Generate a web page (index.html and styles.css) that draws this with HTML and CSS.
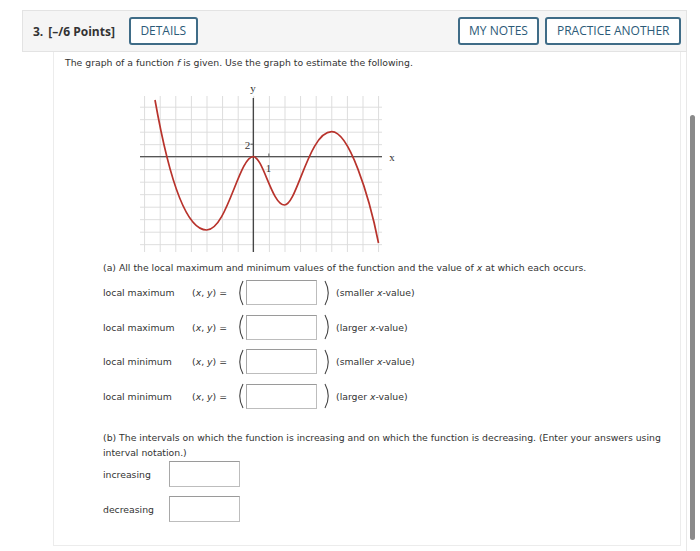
FILE: index.html
```html
<!DOCTYPE html>
<html>
<head>
<meta charset="utf-8">
<link rel="stylesheet" href="styles.css">
</head>
<body>
<div class="page">
  <div class="question">
    <div class="qhead">
      <span class="qnum">3.</span>
      <span class="qpts">[–/6 Points]</span>
      <button class="btn btn-details">DETAILS</button>
      <span class="spacer"></span>
      <button class="btn">MY NOTES</button>
      <button class="btn">PRACTICE ANOTHER</button>
    </div>
    <div class="qwrap">
      <div class="qbody">
        <p class="intro">The graph of a function <i>f</i> is given. Use the graph to estimate the following.</p>
        <svg class="graph" width="270" height="172" viewBox="128 80 270 172">
          <defs>
            <pattern id="grid" patternUnits="userSpaceOnUse" x="144.1" y="106.7" width="15.6" height="12.5">
              <path d="M0.5 0 V12.5 M0 0.5 H15.6" stroke="#dcdcdc" stroke-width="1" fill="none"/>
            </pattern>
          </defs>
          <rect x="140" y="96" width="242" height="156" fill="url(#grid)"/>
          <line x1="140" y1="156.7" x2="382" y2="156.7" stroke="#555" stroke-width="1.2"/>
          <line x1="253.3" y1="98" x2="253.3" y2="252" stroke="#333" stroke-width="1.2"/>
          <line x1="250.5" y1="144.2" x2="253.3" y2="144.2" stroke="#555" stroke-width="1"/>
          <line x1="268.9" y1="153.5" x2="268.9" y2="156.7" stroke="#555" stroke-width="1"/>
          <text x="253" y="92" class="glbl" text-anchor="middle">y</text>
          <text x="392" y="161" class="glbl" text-anchor="middle">x</text>
          <text x="247.5" y="148.5" class="glbl" text-anchor="middle">2</text>
          <text x="268.5" y="172" class="glbl" text-anchor="middle">1</text>
          <path d="M155 100 C163 145 180 230 206.7 230 C227 230 239 156.7 253.3 156.7 C263 156.7 272 205 284.5 205 C297 205 309 131.7 331.7 131.7 C349 131.7 369 195 378.5 243" fill="none" stroke="#b8332c" stroke-width="1.7"/>
        </svg>
        <p class="parta">(a) All the local maximum and minimum values of the function and the value of <i>x</i> at which each occurs.</p>
        <div class="row">
          <span class="lbl">local maximum</span>
          <span class="xy">(<i>x</i>, <i>y</i>) =</span>
          <svg class="pl" width="7" height="26" viewBox="0 0 7 26"><path d="M6 1 Q-0.5 13 6 25" fill="none" stroke="#444" stroke-width="1.1"/></svg>
          <span class="box"></span>
          <svg class="pr" width="7" height="26" viewBox="0 0 7 26"><path d="M1 1 Q7.5 13 1 25" fill="none" stroke="#444" stroke-width="1.1"/></svg>
          <span class="note">(smaller <i>x</i>-value)</span>
        </div>
        <div class="row">
          <span class="lbl">local maximum</span>
          <span class="xy">(<i>x</i>, <i>y</i>) =</span>
          <svg class="pl" width="7" height="26" viewBox="0 0 7 26"><path d="M6 1 Q-0.5 13 6 25" fill="none" stroke="#444" stroke-width="1.1"/></svg>
          <span class="box"></span>
          <svg class="pr" width="7" height="26" viewBox="0 0 7 26"><path d="M1 1 Q7.5 13 1 25" fill="none" stroke="#444" stroke-width="1.1"/></svg>
          <span class="note">(larger <i>x</i>-value)</span>
        </div>
        <div class="row">
          <span class="lbl">local minimum</span>
          <span class="xy">(<i>x</i>, <i>y</i>) =</span>
          <svg class="pl" width="7" height="26" viewBox="0 0 7 26"><path d="M6 1 Q-0.5 13 6 25" fill="none" stroke="#444" stroke-width="1.1"/></svg>
          <span class="box"></span>
          <svg class="pr" width="7" height="26" viewBox="0 0 7 26"><path d="M1 1 Q7.5 13 1 25" fill="none" stroke="#444" stroke-width="1.1"/></svg>
          <span class="note">(smaller <i>x</i>-value)</span>
        </div>
        <div class="row">
          <span class="lbl">local minimum</span>
          <span class="xy">(<i>x</i>, <i>y</i>) =</span>
          <svg class="pl" width="7" height="26" viewBox="0 0 7 26"><path d="M6 1 Q-0.5 13 6 25" fill="none" stroke="#444" stroke-width="1.1"/></svg>
          <span class="box"></span>
          <svg class="pr" width="7" height="26" viewBox="0 0 7 26"><path d="M1 1 Q7.5 13 1 25" fill="none" stroke="#444" stroke-width="1.1"/></svg>
          <span class="note">(larger <i>x</i>-value)</span>
        </div>
        <p class="partb">(b) The intervals on which the function is increasing and on which the function is decreasing. (Enter your answers using interval notation.)</p>
        <div class="brow brow-first">
          <span class="blbl">increasing</span>
          <span class="box"></span>
        </div>
        <div class="brow">
          <span class="blbl">decreasing</span>
          <span class="box"></span>
        </div>
      </div>
    </div>
  </div>
  <div class="scrollbar"></div>
</div>
</body>
</html>
```

FILE: styles.css
```css
* { box-sizing: border-box; }

body {
  margin: 0;
  background: #fff;
  font-family: "DejaVu Sans", Verdana, sans-serif;
  color: #333;
  overflow: hidden;
}

.page {
  position: relative;
  width: 700px;
  height: 551px;
  padding: 10px 0 0 22px;
}

.question {
  width: 665px;
}

.qhead {
  display: flex;
  align-items: center;
  height: 42px;
  padding: 0 5px 0 10px;
  background: #f5f5f5;
  border: 1px solid #e3e3e3;
  font-family: "Open Sans", "Noto Sans", sans-serif;
}

.qnum {
  font-weight: 700;
  font-size: 12px;
  color: #333;
}

.qpts {
  margin-left: 5px;
  font-weight: 700;
  font-size: 12px;
  color: #333;
}

.spacer { flex: 1; }

.btn {
  height: 28px;
  padding: 0 9.5px;
  margin-left: 6px;
  background: #fff;
  border: 2px solid #3f6c87;
  border-radius: 3px;
  font-family: "Open Sans", "Noto Sans", sans-serif;
  font-size: 12px;
  color: #2c5a78;
  line-height: 24px;
}

.btn-details { margin-left: 14px; }

.qwrap {
  border-right: 1px solid #e8e8e8;
  padding: 0 5px 20px 31px;
}

.qbody {
  height: 494px;
  border: 1px solid #ececec;
  border-top: none;
  font-size: 9.3px;
}

.intro {
  margin: 0;
  padding: 4px 0 0 11px;
  line-height: 14px;
}

.graph {
  display: block;
  margin: 10px 0 0 74px;
}

.glbl {
  font-family: "Liberation Serif", "DejaVu Serif", serif;
  font-size: 11px;
  fill: #333;
}

.parta {
  margin: 9px 0 0 49px;
  line-height: 14px;
}

.row {
  display: flex;
  align-items: center;
  height: 25px;
  margin: 9.5px 0 0 49px;
}

.row:first-of-type { margin-top: 5px; }

.lbl { width: 89px; }
.xy { width: 45px; }

.pl { margin-right: 2px; }
.pr { margin-left: 7px; }
.note { margin-left: 5px; }

.box {
  display: block;
  width: 71px;
  height: 25px;
  background: #fff;
  border: 1px solid #bdbdbd;
  border-top-color: #9a9a9a;
  border-left-color: #a8a8a8;
}

.partb {
  width: 572px;
  margin: 21px 0 0 49px;
  line-height: 15px;
}

.brow {
  display: flex;
  align-items: center;
  height: 26px;
  margin: 9px 0 0 49px;
}

.brow-first { margin-top: 1.5px; }

.blbl { width: 66px; }

.brow .box { height: 26px; }

.scrollbar {
  position: absolute;
  left: 690px;
  top: 115px;
  width: 5px;
  height: 425px;
  border-radius: 3px;
  background: #8a8a8a;
}
```
